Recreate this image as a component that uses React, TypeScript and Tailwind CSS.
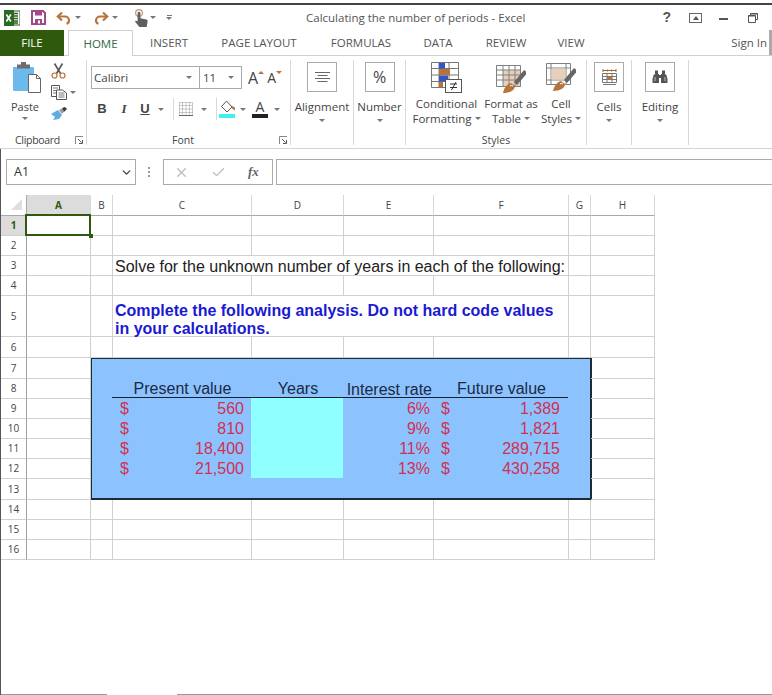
import { Check, ChevronDown, X } from "lucide-react";

const ui = "font-['Open_Sans',sans-serif]";
const sheet = "font-['Liberation_Sans',Arial,sans-serif]";

const columns = ["A", "B", "C", "D", "E", "F", "G", "H"];
const rows = Array.from({ length: 16 }, (_, i) => i + 1);

const tabs = [
  { label: "INSERT", width: "w-[72px]" },
  { label: "PAGE LAYOUT", width: "w-[108px]" },
  { label: "FORMULAS", width: "w-[96px]" },
  { label: "DATA", width: "w-[58px]" },
  { label: "REVIEW", width: "w-[78px]" },
  { label: "VIEW", width: "w-[52px]" },
];

const tableRows = [
  { present: "560", rate: "6%", future: "1,389" },
  { present: "810", rate: "9%", future: "1,821" },
  { present: "18,400", rate: "11%", future: "289,715" },
  { present: "21,500", rate: "13%", future: "430,258" },
];

function Caret() {
  return <span className="inline-block h-0 w-0 border-x-[3px] border-t-[3px] border-x-transparent border-t-[#777]" />;
}

function Launcher() {
  return (
    <svg width="9" height="9" viewBox="0 0 9 9" className="shrink-0">
      <path d="M0.5 8V0.5H8" fill="none" stroke="#888" />
      <path d="M3 3l3.5 3.5M7.5 4v3.5H4" fill="none" stroke="#555" />
    </svg>
  );
}

function ExcelLogo() {
  return (
    <svg width="16" height="16" viewBox="0 0 16 16">
      <rect x="5" y="1" width="11" height="14" fill="#fff" stroke="#2f5a1c" />
      <path d="M10 3.5h4M10 6h4M10 8.5h4M10 11h4M10 13h4" stroke="#2f5a1c" strokeWidth="1.4" />
      <rect x="0" y="0" width="10" height="16" fill="#2a6a22" />
      <path d="M2.4 4.5l4.4 7M6.8 4.5l-4.4 7" stroke="#fff" strokeWidth="1.6" />
    </svg>
  );
}

function SaveIcon() {
  return (
    <svg width="15" height="15" viewBox="0 0 15 15">
      <path d="M1 1h11l2 2v11H1z" fill="#fff" stroke="#a2478a" strokeWidth="2" />
      <rect x="4" y="1" width="7" height="4.5" fill="#a2478a" />
      <rect x="4" y="9" width="7" height="5" fill="#a2478a" />
      <rect x="7" y="10.5" width="2" height="3" fill="#fff" />
    </svg>
  );
}

function UndoIcon({ flip }: { flip?: boolean }) {
  return (
    <svg width="16" height="14" viewBox="0 0 16 14" className={flip ? "-scale-x-100" : ""}>
      <path d="M6 1.5L1.8 5.5 6 9.5" fill="none" stroke="#b8733a" strokeWidth="2.2" />
      <path d="M2.5 5.5h6.5a4 4 0 0 1 4 4c0 1.5-1 2.8-2.5 3.3" fill="none" stroke="#b8733a" strokeWidth="2.2" />
    </svg>
  );
}

function TouchIcon() {
  return (
    <svg width="15" height="20" viewBox="0 0 15 20">
      <circle cx="5" cy="4" r="3.4" fill="none" stroke="#c19a78" strokeWidth="1.2" />
      <path d="M3.6 4.2a1.4 1.4 0 0 1 2.8 0v5l6 1.4c1 .3 1.4 1 1.2 2l-1 5.4H5.4L1 12.5l1-1 1.6 1z" fill="#5f5f5f" />
    </svg>
  );
}

function PasteIcon() {
  return (
    <svg width="30" height="32" viewBox="0 0 30 32">
      <path d="M1 6h20a1 1 0 0 1 1 1v22a1 1 0 0 1-1 1H2a1 1 0 0 1-1-1z" fill="#6cb9ec" />
      <rect x="5" y="3.5" width="13" height="4" fill="#6d6d6d" />
      <rect x="9" y="1" width="5" height="3.5" fill="#6d6d6d" />
      <path d="M16.5 13.5h8l4 4v14h-12z" fill="#fff" stroke="#666" />
      <path d="M24.5 13.5v4h4" fill="none" stroke="#666" />
    </svg>
  );
}

function ScissorsIcon() {
  return (
    <svg width="15" height="16" viewBox="0 0 15 16">
      <path d="M3.5 0.5l6 10M11.5 0.5l-6 10" stroke="#555" strokeWidth="1.6" />
      <circle cx="3.5" cy="12.5" r="2.5" fill="none" stroke="#b8733a" strokeWidth="1.2" />
      <circle cx="11.5" cy="12.5" r="2.5" fill="none" stroke="#b8733a" strokeWidth="1.2" />
    </svg>
  );
}

function CopyIcon() {
  return (
    <svg width="16" height="15" viewBox="0 0 16 15">
      <path d="M0.5 0.5h8v11h-8z" fill="#fff" stroke="#555" />
      <path d="M2 3h5M2 5.5h5M2 8h5" stroke="#777" />
      <path d="M5.5 5h6l4 3v6.5h-10z" fill="#fff" stroke="#555" />
      <path d="M7.5 8h6M7.5 10h6M7.5 12h6" stroke="#777" />
    </svg>
  );
}

function BrushIcon() {
  return (
    <svg width="16" height="14" viewBox="0 0 16 14">
      <path d="M0 7l7-4 4 5-3 4-6 1 2-3z" fill="#5dade2" />
      <path d="M8 3l3-1.5 2 3-2 2.5z" fill="#9a9a9a" />
      <path d="M11 1l3-1 2 2-3 3z" fill="#3d3d3d" />
    </svg>
  );
}

function BordersIcon() {
  return (
    <svg width="14" height="14" viewBox="0 0 14 14">
      <path d="M0.5 0.5h13v13M0.5 0.5v13M7 0.5v13M0.5 7h13M3.5 0.5v13M10.5 0.5v13M0.5 3.5h13M0.5 10.5h13" fill="none" stroke="#999" strokeDasharray="1 1" />
      <path d="M0 13.5h14" stroke="#666" />
    </svg>
  );
}

function FillIcon() {
  return (
    <svg width="17" height="18" viewBox="0 0 17 18">
      <path d="M7.5 1l5.5 6-5 5-5.5-5.5z" fill="#fff" stroke="#555" />
      <path d="M13 6l3 1.5v3l-3-2z" fill="#b8733a" />
      <rect x="0" y="14" width="16" height="4" fill="#3ff0f0" />
    </svg>
  );
}

function AlignIcon() {
  return (
    <svg width="15" height="11" viewBox="0 0 15 11">
      <path d="M0 0.5h15M2.5 3.5h10M0 6.5h15M2.5 9.5h10" stroke="#666" />
    </svg>
  );
}

function ConditionalIcon() {
  return (
    <svg width="31" height="31" viewBox="0 0 31 31">
      <path d="M0.5 0.5h27v25h-27zM0.5 6.5h27M0.5 13h27M0.5 19.5h27M8 0.5v25M18 0.5v25" fill="#fff" stroke="#777" />
      <rect x="8" y="1" width="6" height="5.5" fill="#2f55c8" />
      <rect x="8" y="7" width="11" height="6" fill="#b8733a" />
      <rect x="8" y="13.5" width="9" height="6" fill="#2f55c8" />
      <rect x="8" y="20" width="4" height="5.5" fill="#b8733a" />
      <rect x="14.5" y="17.5" width="16" height="13" fill="#fff" stroke="#555" />
      <path d="M19 22h7M19 25.5h7M25 20l-4.5 8" fill="none" stroke="#333" />
    </svg>
  );
}

function TableStyleIcon() {
  return (
    <svg width="30" height="29" viewBox="0 0 30 29">
      <rect x="7" y="5" width="17" height="16" fill="#e6cfbb" />
      <path d="M0.5 0.5h24v21h-24zM0.5 5h24M0.5 10h24M0.5 15h24M7 0.5v21M13 0.5v21M19 0.5v21" fill="none" stroke="#808080" />
      <path d="M18 17l10-12 2 1.5v3L21 20z" fill="#666" />
      <path d="M7 28c1-5 4-9 8-10l4 3c0 4-5 7-12 7z" fill="#b8733a" />
      <path d="M14 21a2.4 2.4 0 0 1 3 0" stroke="#fff" fill="none" />
    </svg>
  );
}

function CellStyleIcon() {
  return (
    <svg width="30" height="29" viewBox="0 0 30 29">
      <path d="M0.5 0.5h24v21h-24zM0.5 5h24M5 0.5v21M20 0.5v21M0.5 17h24" fill="none" stroke="#808080" />
      <rect x="5.5" y="5.5" width="14" height="11" fill="#e6cfbb" />
      <path d="M18 17l10-12 2 1.5v3L21 20z" fill="#666" />
      <path d="M7 28c1-5 4-9 8-10l4 3c0 4-5 7-12 7z" fill="#b8733a" />
      <path d="M14 21a2.4 2.4 0 0 1 3 0" stroke="#fff" fill="none" />
    </svg>
  );
}

function CellsIcon() {
  return (
    <svg width="15" height="16" viewBox="0 0 15 16">
      <path d="M1 1.5h13M1 0v3M14 0v3M5.5 0.5v2M9.5 0.5v2" stroke="#a0642f" fill="none" />
      <path d="M0.5 4.5h14v9h-14zM0.5 7.5h14M0.5 10.5h14M5 4.5v9M10 4.5v9" fill="#fff" stroke="#777" />
      <rect x="5" y="7.5" width="5" height="3" fill="#b8733a" />
      <path d="M1 15.5h13" stroke="#777" />
    </svg>
  );
}

function BinocularsIcon() {
  return (
    <svg width="16" height="14" viewBox="0 0 16 14">
      <path d="M3 0.5h3v3.5h1v9H0.5V9l1.2-4.5H3z" fill="#555" />
      <path d="M13 0.5h-3v3.5H9v9h6.5V9l-1.2-4.5H13z" fill="#555" />
      <rect x="7" y="5" width="2" height="3" fill="#555" />
      <path d="M3 7v4M13 7v4" stroke="#bbb" />
    </svg>
  );
}

function IconBox({ children }: { children: React.ReactNode }) {
  return <div className="flex h-[30px] w-[30px] items-center justify-center border border-[#ababab]">{children}</div>;
}

function BigButton({ label, width, icon }: { label: string; width: string; icon: React.ReactNode }) {
  return (
    <div className={`${width} flex h-[85px] shrink-0 flex-col items-center border-r border-[#d8d8d8] pt-[2px]`}>
      <IconBox>{icon}</IconBox>
      <div className="mt-[7px] text-[11.5px] leading-[16px] text-[#444]">{label}</div>
      <div className="mt-[2px] flex h-[6px] items-center">
        <Caret />
      </div>
    </div>
  );
}

function StyleButton({ top, bottom, width, icon }: { top: string; bottom: string; width: string; icon: React.ReactNode }) {
  return (
    <div className={`${width} flex flex-col items-center whitespace-nowrap`}>
      <div className="flex h-[36px] items-start pt-[2px]">{icon}</div>
      <div className="text-[11.5px] leading-[15px] text-[#444]">{top}</div>
      <div className="flex items-center gap-[3px] text-[11.5px] leading-[15px] text-[#444]">
        {bottom}
        <Caret />
      </div>
    </div>
  );
}

function SmallBtn({ width, children }: { width: string; children: React.ReactNode }) {
  return <div className={`${width} flex h-[22px] shrink-0 items-center justify-center`}>{children}</div>;
}

function Ribbon() {
  return (
    <div className="flex h-[93px] border-b border-[#d4d4d4] pt-[4px]">
      {/* Clipboard */}
      <div className="flex h-[85px] w-[87px] shrink-0 flex-col border-r border-[#d8d8d8]">
        <div className="flex">
          <div className="flex w-[50px] flex-col items-center pt-[1px]">
            <div className="ml-[4px]">
              <PasteIcon />
            </div>
            <div className="mt-[6px] w-[52px] text-center text-[11px] leading-[16px] text-[#444]">Paste</div>
            <div className="flex h-[6px] items-center">
              <Caret />
            </div>
          </div>
          <div className="flex flex-col">
            <div className="mt-[3px] pl-[1px]">
              <ScissorsIcon />
            </div>
            <div className="mt-[6px] flex items-center gap-[3px] pl-[1px]">
              <CopyIcon />
              <Caret />
            </div>
            <div className="mt-[7px] pl-[1px]">
              <BrushIcon />
            </div>
          </div>
        </div>
        <div className="mt-auto -mb-[3px] flex h-[16px] items-center pl-[15px] pr-[2px] text-[10.5px] leading-[16px] tracking-[-0.3px] text-[#444]">
          Clipboard
          <span className="ml-auto">
            <Launcher />
          </span>
        </div>
      </div>

      {/* Font */}
      <div className="flex h-[85px] w-[204px] shrink-0 flex-col border-r border-[#d8d8d8]">
        <div className="mt-[6px] ml-[4px] flex items-center">
          <div className="flex h-[23px] w-[109px] items-center justify-between border border-[#ababab] pl-[2px] pr-[7px] text-[11.5px] text-[#444]">
            Calibri
            <Caret />
          </div>
          <div className="-ml-px flex h-[23px] w-[43px] items-center justify-between border border-[#ababab] pl-[3px] pr-[7px] text-[11.5px] text-[#444]">
            11
            <Caret />
          </div>
          <div className="ml-[6px] flex items-start text-[16px] leading-[20px] text-[#444]">
            A<span className="mt-[3px] h-0 w-0 border-x-[3px] border-b-[3px] border-x-transparent border-b-[#b8733a]" />
          </div>
          <div className="ml-[3px] flex items-start text-[14px] leading-[20px] text-[#444]">
            A<span className="mt-[3px] h-0 w-0 border-x-[3px] border-t-[3px] border-x-transparent border-t-[#b8733a]" />
          </div>
        </div>
        <div className="ml-[4px] mt-[9px] flex items-center">
          <SmallBtn width="w-[22px]">
            <span className={`${sheet} text-[13px] font-bold text-[#444]`}>B</span>
          </SmallBtn>
          <SmallBtn width="w-[22px]">
            <span className="font-['Liberation_Serif',serif] text-[13px] font-bold italic text-[#444]">I</span>
          </SmallBtn>
          <SmallBtn width="w-[20px]">
            <span className={`${sheet} text-[13px] font-bold text-[#444] underline`}>U</span>
          </SmallBtn>
          <SmallBtn width="w-[12px]">
            <Caret />
          </SmallBtn>
          <div className="ml-[6px] h-[22px] w-px bg-[#d8d8d8]" />
          <SmallBtn width="w-[24px]">
            <BordersIcon />
          </SmallBtn>
          <SmallBtn width="w-[12px]">
            <Caret />
          </SmallBtn>
          <div className="ml-[6px] h-[22px] w-px bg-[#d8d8d8]" />
          <SmallBtn width="w-[20px]">
            <FillIcon />
          </SmallBtn>
          <SmallBtn width="w-[12px]">
            <Caret />
          </SmallBtn>
          <SmallBtn width="w-[22px]">
            <div className="flex flex-col items-center">
              <span className="text-[14px] leading-[14px] text-[#444]">A</span>
              <span className="h-[4px] w-[16px] bg-[#222]" />
            </div>
          </SmallBtn>
          <SmallBtn width="w-[12px]">
            <Caret />
          </SmallBtn>
        </div>
        <div className="mt-auto -mb-[3px] flex h-[16px] items-center pl-[85px] pr-[2px] text-[10.5px] leading-[16px] text-[#444]">
          Font
          <span className="ml-auto">
            <Launcher />
          </span>
        </div>
      </div>

      <BigButton label="Alignment" width="w-[63px]" icon={<AlignIcon />} />
      <BigButton label="Number" width="w-[52px]" icon={<span className="text-[16px] text-[#444]">%</span>} />

      {/* Styles */}
      <div className="flex h-[85px] w-[181px] shrink-0 flex-col border-r border-[#d8d8d8]">
        <div className="flex pl-px">
          <StyleButton top="Conditional" bottom="Formatting" width="w-[79px]" icon={<ConditionalIcon />} />
          <StyleButton top="Format as" bottom="Table" width="w-[50px]" icon={<div className="pt-[3px]"><TableStyleIcon /></div>} />
          <StyleButton top="Cell" bottom="Styles" width="w-[50px]" icon={<div className="pt-[1px]"><CellStyleIcon /></div>} />
        </div>
        <div className="mt-auto -mb-[3px] h-[16px] text-center text-[10.5px] leading-[16px] text-[#444]">Styles</div>
      </div>

      <BigButton label="Cells" width="w-[45px]" icon={<CellsIcon />} />
      <BigButton label="Editing" width="w-[57px]" icon={<BinocularsIcon />} />
    </div>
  );
}

function DataTable() {
  return (
    <div className={`${sheet} col-start-3 col-end-9 row-start-8 row-end-15 -ml-px -mr-px -mt-px grid grid-cols-[20px_139px_92px_90px_135px_22px] grid-rows-[19px_20px_20px_20px_20px_20px_21px] border-2 border-[#1c2b36] bg-[#8cc3ff] text-[16px] leading-[20px]`}>
      <div className="col-span-6" />
      <div />
      <div className="border-b border-[#16202a] pl-[2px] pt-px text-center text-[#1a2a44]">Present value</div>
      <div className="border-b border-[#16202a] pl-[2px] pt-px text-center text-[#1a2a44]">Years</div>
      <div className="flex justify-end border-b border-[#16202a] pr-px pt-[2px] text-[#1a2a44]">Interest rate</div>
      <div className="border-b border-[#16202a] pl-[2px] pt-px text-center text-[#1a2a44]">Future value</div>
      <div />
      {tableRows.map((row) => (
        <div key={row.present} className="contents">
          <div />
          <div className="flex justify-between pl-[8px] pr-[7px] pt-px text-[#d2304f]">
            <span>$</span>
            <span>{row.present}</span>
          </div>
          <div className="bg-[#8fffff]" />
          <div className="pr-[3px] pt-px text-right text-[#d2304f]">{row.rate}</div>
          <div className="flex justify-between pl-[8px] pr-[8px] pt-px text-[#d2304f]">
            <span>$</span>
            <span>{row.future}</span>
          </div>
          <div />
        </div>
      ))}
    </div>
  );
}

function Sheet() {
  const line = "border-r border-b border-[#d0d0d0]";
  return (
    <div className="mt-[10px] grid w-fit grid-cols-[26px_64px_22px_139px_92px_90px_135px_22px_64px] grid-rows-[21px_20px_20px_20px_20px_41px_21px_21px_20px_20px_20px_20px_20px_21px_20px_20px_20px]">
      <DataTable />
      <div className="flex items-center justify-center border-r border-b border-[#a8a8a8] pl-[6px]">
        <span className="mt-[-1px] h-0 w-0 border-b-[11px] border-l-[11px] border-b-[#dfdfdf] border-l-transparent" />
      </div>
      {columns.map((c) => (
        <div
          key={c}
          className={`flex items-center justify-center border-r border-b border-b-[#a8a8a8] border-r-[#d8d8d8] text-[10px] ${
            c === "A" ? "bg-[#dcdcdc] font-bold text-[#2f5a0e]" : "text-[#444]"
          }`}
        >
          {c}
        </div>
      ))}
      {rows.map((r) => {
        if (r >= 7 && r <= 13) {
          return (
            <div key={r} className="contents">
              <RowHeader r={r} />
              <div className={line} />
              <div className={`${line} col-start-9`} />
            </div>
          );
        }
        if (r === 3 || r === 5) {
          return (
            <div key={r} className="contents">
              <RowHeader r={r} />
              <div className={line} />
              <div className={line} />
              {r === 3 ? (
                <div className={`${line} ${sheet} col-span-4 flex items-center pl-[2px] pt-[2px] text-[16px] text-[#222]`}>
                  Solve for the unknown number of years in each of the following:
                </div>
              ) : (
                <div className={`${line} ${sheet} col-span-4 flex items-start pl-[2px] pt-[6px] text-[16px] leading-[18px] font-bold text-[#1a1ad2]`}>
                  <span>
                    Complete the following analysis. Do not hard code values
                    <br />
                    in your calculations.
                  </span>
                </div>
              )}
              <div className={line} />
              <div className={line} />
            </div>
          );
        }
        return (
          <div key={r} className="contents">
            <RowHeader r={r} />
            {columns.map((c) => (
              <div key={c} className={`${line} relative`}>
                {r === 1 && c === "A" && (
                  <div className="absolute -left-[2px] -top-[2px] z-10 h-[22px] w-[66px] border-2 border-[#2f5a0e]">
                    <span className="absolute -bottom-[4px] -right-[4px] h-[4px] w-[4px] bg-[#2f5a0e]" />
                  </div>
                )}
              </div>
            ))}
          </div>
        );
      })}
    </div>
  );
}

function RowHeader({ r }: { r: number }) {
  return (
    <div
      className={`col-start-1 flex items-center justify-center border-b border-r border-b-[#d0d0d0] border-r-[#a0a0a0] text-[10px] ${
        r === 1 ? "bg-[#dcdcdc] font-bold text-[#2f5a0e]" : "text-[#444]"
      }`}
    >
      {r}
    </div>
  );
}

export default function App() {
  return (
    <div className={`${ui} flex h-[695px] w-[772px] flex-col overflow-hidden bg-white`}>
      {/* title bar */}
      <div className="mt-[3px] flex h-[27px] shrink-0 items-center border-t-2 border-[#444] pl-[4px]">
        <ExcelLogo />
        <div className="ml-[11px]">
          <SaveIcon />
        </div>
        <div className="ml-[10px]">
          <UndoIcon />
        </div>
        <div className="ml-[3px] flex">
          <Caret />
        </div>
        <div className="ml-[12px]">
          <UndoIcon flip />
        </div>
        <div className="ml-[3px] flex">
          <Caret />
        </div>
        <div className="ml-[16px] mt-[2px]">
          <TouchIcon />
        </div>
        <div className="ml-[1px] flex">
          <Caret />
        </div>
        <div className="ml-[10px] flex flex-col items-center gap-px">
          <span className="h-px w-[5px] bg-[#777]" />
          <Caret />
        </div>
        <div className="ml-[134px] text-[11.5px] text-[#555]">Calculating the number of periods - Excel</div>
        <div className="ml-auto flex items-center pr-[14px]">
          <span className={`${sheet} text-[14px] font-bold text-[#555]`}>?</span>
          <div className="ml-[18px] flex h-[10px] w-[13px] items-center justify-center border border-[#666]">
            <span className="h-0 w-0 border-x-[3px] border-b-[4px] border-x-transparent border-b-[#555]" />
          </div>
          <span className="ml-[17px] mt-[3px] h-[2px] w-[9px] bg-[#555]" />
          <svg width="10" height="10" viewBox="0 0 10 10" className="ml-[20px]">
            <path d="M2.5 2.5V0.5h7v6h-2M0.5 2.5h7v7h-7z" fill="none" stroke="#555" />
            <path d="M0.5 3h7M2.5 1h7" stroke="#555" />
          </svg>
        </div>
      </div>

      {/* tabs */}
      <div className="flex h-[26px] shrink-0 items-end border-b border-[#d0d0d0] text-[11.5px] text-[#555]">
        <div className="-mb-px flex h-[26px] w-[64px] items-center justify-center bg-[#2f5a0e] text-white">FILE</div>
        <div className="relative -mb-px ml-[4px] flex h-[26px] w-[65px] items-center justify-center border-x border-t border-[#d0d0d0] bg-white text-[#2f6a4a]">HOME</div>
        {tabs.map((tab) => (
          <div key={tab.label} className={`${tab.width} flex h-[25px] items-center justify-center`}>
            {tab.label}
          </div>
        ))}
        <div className="ml-auto flex h-[25px] items-center pr-[2px]">Sign In</div>
        <div className="h-[25px] w-[3px] bg-[#aaa]" />
      </div>

      <Ribbon />

      {/* below the ribbon */}
      <div className="flex flex-1 flex-col border-l border-[#555]">
        <div className="mt-[10px] flex h-[26px] shrink-0 items-stretch">
          <div className="ml-[5px] flex w-[130px] items-center justify-between border border-[#ababab] pl-[7px] pr-[2px] text-[12.5px] text-[#333]">
            A1
            <ChevronDown size={13} strokeWidth={2.5} color="#444" />
          </div>
          <div className="ml-[11px] flex w-[4px] flex-col items-center justify-center gap-[2px]">
            <span className="h-[2px] w-[2px] bg-[#999]" />
            <span className="h-[2px] w-[2px] bg-[#999]" />
            <span className="h-[2px] w-[2px] bg-[#999]" />
          </div>
          <div className="ml-[12px] flex w-[110px] items-center border border-[#ababab] pl-[10px]">
            <X size={15} color="#bbb" />
            <Check size={15} color="#bbb" className="ml-[22px]" />
            <span className="ml-[22px] font-['Liberation_Serif',serif] text-[13px] font-bold italic text-[#666]">fx</span>
          </div>
          <div className="ml-[3px] flex-1 border-y border-l border-[#ababab]" />
        </div>

        <Sheet />

        <div className="mt-auto flex h-px">
          <div className="w-[106px] bg-[#999]" />
          <div className="ml-[70px] flex-1 bg-[#999]" />
        </div>
      </div>
    </div>
  );
}
